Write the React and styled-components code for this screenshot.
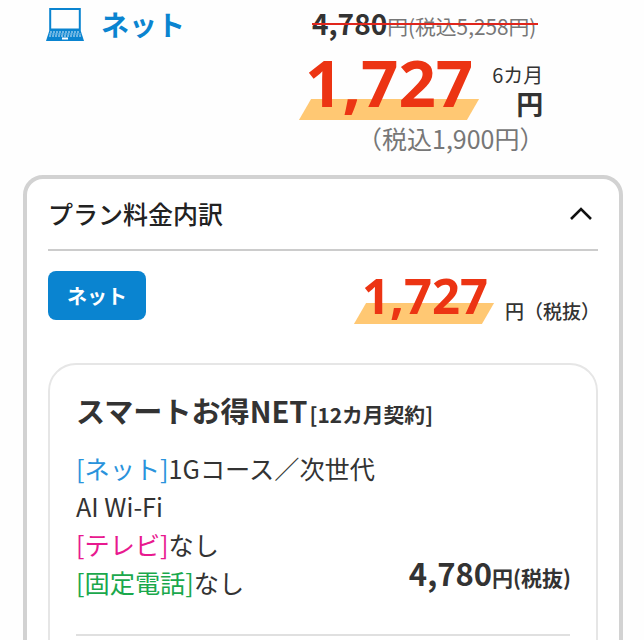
import React from "react";
import styled, { createGlobalStyle } from "styled-components";

const Global = createGlobalStyle`
  html, body { margin: 0; padding: 0; background: #fefefe; }
  body { width: 644px; height: 640px; overflow: hidden; font-family: "Noto Sans CJK JP", "Noto Sans", sans-serif; color: #222; }
`;
const Page = styled.div`
  width: 644px; height: 640px; overflow: hidden; box-sizing: border-box; padding: 0 21px 0 23px;
`;
const Header = styled.div`
  display: flex; justify-content: space-between; height: 175px; box-sizing: border-box;
`;
const Service = styled.div`
  display: flex; align-items: flex-start; gap: 17px; padding: 6px 0 0 23px; color: #0a84d0;
  font-size: 28px; font-weight: 700; line-height: 36px;
`;
const Prices = styled.div`
  display: flex; flex-direction: column; align-items: flex-start; width: 245px; margin-right: 73px;
`;
const OldPrice = styled.div`
  position: relative; margin: 3px 0 0 7px; height: 40px; line-height: 40px; white-space: nowrap; color: #777; font-size: 20.8px;
  &::after { content: ""; position: absolute; left: 0; width: 226px; top: 20px; height: 2px; background: #e0261c; }
`;
const OldNum = styled.span`
  font-size: 28px; font-weight: 700; color: #333;
`;
const MainRow = styled.div`
  display: flex; align-items: flex-start; margin-top: 1px;
`;
const Highlight = styled.span`
  position: relative; display: inline-block; color: #ec3413; font-weight: 700; font-family: "Noto Sans", sans-serif;
  font-size: ${p => p.$size}px; line-height: ${p => p.$lh}px; z-index: 0;
  &::before {
    content: ""; position: absolute; z-index: -1; left: ${p => p.$l}px; right: ${p => p.$r}px; bottom: ${p => p.$b}px; height: ${p => p.$h}px;
    background: #ffc873; transform: skewX(-30deg);
  }
`;
const MainUnit = styled.div`
  display: flex; flex-direction: column; align-items: flex-end; margin-left: 18px; margin-top: 18px; width: 52px;
`;
const Months = styled.span`
  font-size: 20px; line-height: 25px; color: #333; white-space: nowrap;
`;
const Yen = styled.span`
  font-size: 27px; font-weight: 700; line-height: 33px; color: #333;
`;
const TaxIn = styled.div`
  font-size: 25px; line-height: 32px; color: #777; margin-left: 52px; white-space: nowrap; margin-top: 2px;
`;
const Card = styled.div`
  box-sizing: border-box; height: 600px; border: 4px solid #d2d2d2; border-radius: 20px; padding: 0 21px; background: #fff;
`;
const CardHead = styled.div`
  display: flex; justify-content: space-between; align-items: center; height: 72px; padding-bottom: 2px; box-sizing: border-box; border-bottom: 2px solid #ccc;
`;
const CardTitle = styled.div`
  font-size: 25px; font-weight: 500; color: #222;
`;
const Chevron = styled.svg`
  width: 24px; height: 16px; margin-right: 5px; display: block;
`;
const Summary = styled.div`
  display: flex; justify-content: space-between; align-items: flex-start; padding-top: 20px;
`;
const Tag = styled.div`
  width: 98px; height: 49px; border-radius: 8px; background: #0a84d0; color: #fff; font-size: 20px; font-weight: 700;
  display: flex; align-items: center; justify-content: center;
`;
const SumRight = styled.div`
  display: flex; align-items: flex-start; margin-right: -2px; margin-top: -3px;
`;
const SumUnit = styled.span`
  font-size: 19px; font-weight: 500; color: #333; margin: 28px 0 0 17px; line-height: 30px; white-space: nowrap;
`;
const Inner = styled.div`
  box-sizing: border-box; margin-top: 37px; height: 400px; border: 2px solid #e6e6e6; border-radius: 28px; padding: 24px 26px 0;
`;
const PlanTitle = styled.div`
  font-size: 29.1px; font-weight: 700; line-height: 42px; color: #333; white-space: nowrap;
`;
const PlanTerm = styled.span`
  font-size: 20.8px; margin-left: 2px;
`;
const PlanBody = styled.div`
  display: flex; justify-content: space-between; align-items: flex-end; margin-top: 14px; padding-bottom: 33px; border-bottom: 2px solid #e0e0e0;
`;
const Lines = styled.div`
  font-size: 25.2px; line-height: 38px; color: #333; width: 320px;
`;
const Cat = styled.span`
  color: ${p => p.$c};
`;
const Price = styled.div`
  font-weight: 700; color: #333; font-size: 21px; margin-right: -1px; line-height: 38px; white-space: nowrap; padding-bottom: 5px;
`;
const PriceNum = styled.span`
  font-size: 31px;
`;
const LaptopIcon = styled.svg`
  display: block; margin-top: 2px; flex: none;
`;

const Laptop = () => (
  <LaptopIcon width="38" height="33" viewBox="0 0 38 33">
    <rect x="4.2" y="1" width="29.6" height="20.5" fill="none" stroke="#0a84d0" strokeWidth="2" />
    <path d="M3.5 22h31L38 33H0z" fill="#0a84d0" />
    <path d="M4 24h30M3.4 26h31.2M3 28h32" stroke="#d5eaf8" strokeWidth="1.2" strokeDasharray="2 1" />
    <rect x="16" y="29.5" width="6" height="2" fill="#fff" />
  </LaptopIcon>
);

export default function App() {
  return (
    <Page>
      <Global />
      <Header>
        <Service><Laptop />ネット</Service>
        <Prices>
          <OldPrice><OldNum>4,780</OldNum>円(税込5,258円)</OldPrice>
          <MainRow>
            <Highlight $size={65.4} $lh={76} $l={0} $r={0} $b={0} $h={21}>1,727</Highlight>
            <MainUnit><Months>6カ月</Months><Yen>円</Yen></MainUnit>
          </MainRow>
          <TaxIn>（税込1,900円）</TaxIn>
        </Prices>
      </Header>
      <Card>
        <CardHead>
          <CardTitle>プラン料金内訳</CardTitle>
          <Chevron viewBox="0 0 24 16"><path d="M2 14 12 4l10 10" fill="none" stroke="#111" strokeWidth="2.6" /></Chevron>
        </CardHead>
        <Summary>
          <Tag>ネット</Tag>
          <SumRight>
            <Highlight $size={49} $lh={54} $l={-2} $r={0} $b={-2} $h={21}>1,727</Highlight>
            <SumUnit>円（税抜）</SumUnit>
          </SumRight>
        </Summary>
        <Inner>
          <PlanTitle>スマートお得NET<PlanTerm>[12カ月契約]</PlanTerm></PlanTitle>
          <PlanBody>
            <Lines>
              <div><Cat $c="#2a93dc">[ネット]</Cat>1Gコース／次世代</div>
              <div>AI Wi-Fi</div>
              <div><Cat $c="#e8198f">[テレビ]</Cat>なし</div>
              <div><Cat $c="#1aa84c">[固定電話]</Cat>なし</div>
            </Lines>
            <Price><PriceNum>4,780</PriceNum>円(税抜)</Price>
          </PlanBody>
        </Inner>
      </Card>
    </Page>
  );
}
